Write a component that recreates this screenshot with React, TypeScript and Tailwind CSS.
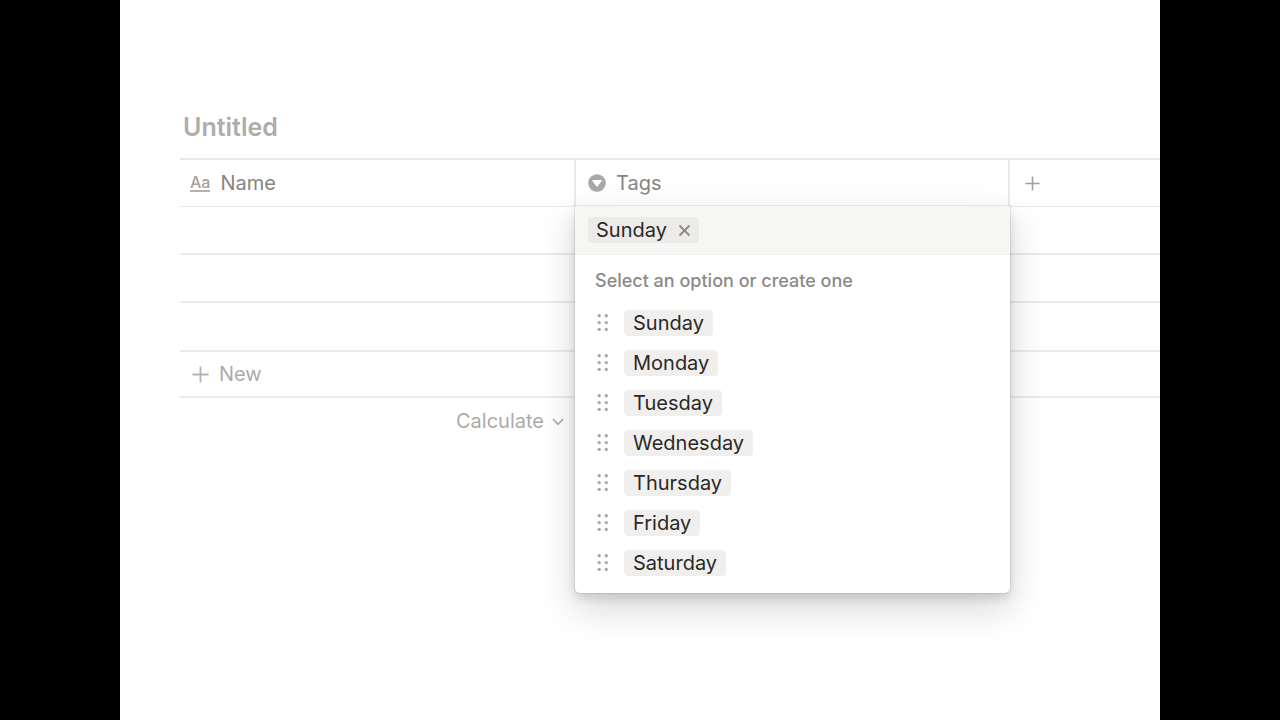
const days = ["Sunday", "Monday", "Tuesday", "Wednesday", "Thursday", "Friday", "Saturday"];

function Plus({ className }: { className: string }) {
  return (
    <svg viewBox="0 0 18 18" className={className} fill="none" stroke="currentColor" strokeWidth="1.9" aria-hidden="true">
      <path d="M9 0.5v17M0.5 9h17" />
    </svg>
  );
}

function TextTypeIcon() {
  return (
    <span className="border-b-2 border-[#b3b2b0] text-base leading-4 font-medium text-[#a3a2a0]" aria-hidden="true">
      Aa
    </span>
  );
}

function SelectTypeIcon() {
  return (
    <svg viewBox="0 0 18 18" className="size-[18px] shrink-0" aria-hidden="true">
      <circle cx="9" cy="9" r="8.8" fill="#a9a8a6" />
      <path d="M4.5 6.1h9a.4.4 0 0 1 .35.6l-4.4 5.8a.55.55 0 0 1-.9 0l-4.4-5.8a.4.4 0 0 1 .35-.6z" fill="#fff" />
    </svg>
  );
}

function DragHandle() {
  return (
    <svg viewBox="0 0 12 18" className="h-[18px] w-3 shrink-0" fill="#a9a8a6" aria-hidden="true">
      {[1.8, 8.6, 15.4].map((y) => (
        <g key={y}>
          <circle cx="2.2" cy={y} r="1.7" />
          <circle cx="9.2" cy={y} r="1.7" />
        </g>
      ))}
    </svg>
  );
}

function OptionMenu() {
  return (
    <div className="absolute top-full -left-px z-10 w-[435px] overflow-hidden rounded-b-[5px] bg-white font-normal text-[#2a2926] shadow-[0_0_0_1px_rgba(15,15,15,0.07),0_5px_10px_rgba(15,15,15,0.12),0_14px_36px_rgba(15,15,15,0.18)]">
      <div className="flex h-[49px] items-center border-b border-[#f0f0ee] bg-[#f6f6f4] pl-[13px]">
        <span className="flex h-[26px] items-center gap-[11px] rounded-[4px] bg-[#ecebe9] px-2">
          Sunday
          <button type="button" aria-label="Remove Sunday" className="text-[#8d8c8a]">
            <svg viewBox="0 0 14 14" className="size-[13px]" fill="none" stroke="currentColor" strokeWidth="2" aria-hidden="true">
              <path d="M1.6 1.6l10.8 10.8M12.4 1.6L1.6 12.4" />
            </svg>
          </button>
        </span>
        <input aria-label="Search options" className="min-w-0 flex-1 bg-transparent px-2 outline-none" />
      </div>
      <p className="px-5 pt-3.5 pb-2.5 text-lg leading-6 font-medium text-[#8b8a87]">Select an option or create one</p>
      <ul className="pb-2.5">
        {days.map((day) => (
          <li key={day}>
            <button type="button" className="flex h-10 w-full items-center gap-[15px] pl-[22px]">
              <DragHandle />
              <span className="flex h-[26px] items-center rounded-[4px] bg-[#f0efed] px-[9px]">{day}</span>
            </button>
          </li>
        ))}
      </ul>
    </div>
  );
}

export default function App() {
  return (
    <div className="min-h-screen bg-black px-[120px] font-['Inter',sans-serif]">
      <main className="min-h-screen overflow-hidden bg-white pt-[110px] pl-[60px]">
        <h1 className="mb-3.5 pl-[3px] text-[25px] leading-[34px] font-semibold text-[#aeadab]">Untitled</h1>
        <table className="w-full table-fixed border-separate border-spacing-0 text-left text-xl leading-6 text-[#acabaa]">
          <colgroup>
            <col className="w-[396px]" />
            <col className="w-[434px]" />
            <col />
          </colgroup>
          <thead className="text-[#868583]">
            <tr className="h-[49px]">
              <th className="border-t-2 border-r-2 border-b border-[#e9e9e8] p-0 pl-2.5 font-normal">
                <div className="flex items-center gap-2.5">
                  <TextTypeIcon />
                  Name
                </div>
              </th>
              <th className="relative border-t-2 border-r-2 border-b border-[#e9e9e8] p-0 pl-3 font-normal">
                <div className="flex items-center gap-2.5">
                  <SelectTypeIcon />
                  Tags
                </div>
                <OptionMenu />
              </th>
              <th className="border-t-2 border-b border-[#e9e9e8] p-0 pl-[15px] font-normal">
                <button type="button" aria-label="Add column" className="flex text-[#a1a09e]">
                  <Plus className="size-[15px]" />
                </button>
              </th>
            </tr>
          </thead>
          <tbody>
            {[0, 1, 2].map((row) => (
              <tr key={row} className="h-12 last:h-[49px]">
                <td className="border-b-2 border-[#ebebea]" />
                <td className="border-b-2 border-[#ebebea]" />
                <td className="border-b-2 border-[#ebebea]" />
              </tr>
            ))}
          </tbody>
          <tbody>
            <tr className="h-[46px]">
              <td colSpan={3} className="border-b-2 border-[#ebebea] p-0 pl-3">
                <button type="button" className="flex items-center gap-2.5">
                  <Plus className="size-[17px] text-[#b5b4b2]" />
                  New
                </button>
              </td>
            </tr>
          </tbody>
          <tfoot>
            <tr className="h-[46px]">
              <td className="p-0 pr-3">
                <button type="button" className="ml-auto flex items-center gap-2">
                  Calculate
                  <svg viewBox="0 0 13 9" className="mt-0.5 h-2 w-3" fill="none" stroke="currentColor" strokeWidth="1.8" aria-hidden="true">
                    <path d="M0.8 1.2l5.7 5.9 5.7-5.9" />
                  </svg>
                </button>
              </td>
              <td />
              <td />
            </tr>
          </tfoot>
        </table>
      </main>
    </div>
  );
}
